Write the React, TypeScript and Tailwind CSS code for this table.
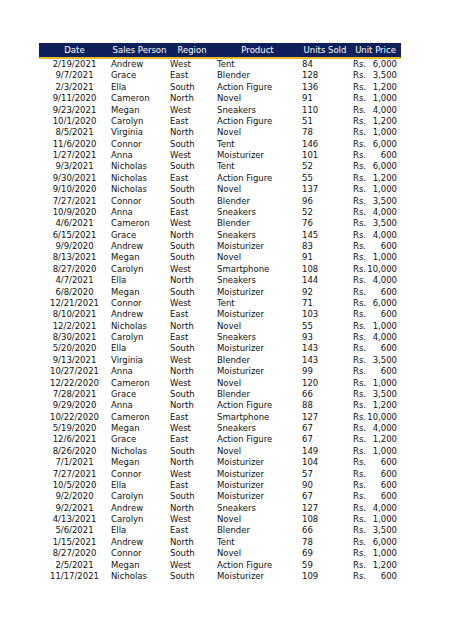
import React from 'react';

type Sale = [string, string, string, string, number, number];

const sales: Sale[] = [
    ['2/19/2021', 'Andrew', 'West', 'Tent', 84, 6000],
    ['9/7/2021', 'Grace', 'East', 'Blender', 128, 3500],
    ['2/3/2021', 'Ella', 'South', 'Action Figure', 136, 1200],
    ['9/11/2020', 'Cameron', 'North', 'Novel', 91, 1000],
    ['9/23/2021', 'Megan', 'West', 'Sneakers', 110, 4000],
    ['10/1/2020', 'Carolyn', 'East', 'Action Figure', 51, 1200],
    ['8/5/2021', 'Virginia', 'North', 'Novel', 78, 1000],
    ['11/6/2020', 'Connor', 'South', 'Tent', 146, 6000],
    ['1/27/2021', 'Anna', 'West', 'Moisturizer', 101, 600],
    ['9/3/2021', 'Nicholas', 'South', 'Tent', 52, 6000],
    ['9/30/2021', 'Nicholas', 'East', 'Action Figure', 55, 1200],
    ['9/10/2020', 'Nicholas', 'South', 'Novel', 137, 1000],
    ['7/27/2021', 'Connor', 'South', 'Blender', 96, 3500],
    ['10/9/2020', 'Anna', 'East', 'Sneakers', 52, 4000],
    ['4/6/2021', 'Cameron', 'West', 'Blender', 76, 3500],
    ['6/15/2021', 'Grace', 'North', 'Sneakers', 145, 4000],
    ['9/9/2020', 'Andrew', 'South', 'Moisturizer', 83, 600],
    ['8/13/2021', 'Megan', 'South', 'Novel', 91, 1000],
    ['8/27/2020', 'Carolyn', 'West', 'Smartphone', 108, 10000],
    ['4/7/2021', 'Ella', 'North', 'Sneakers', 144, 4000],
    ['6/8/2020', 'Megan', 'South', 'Moisturizer', 92, 600],
    ['12/21/2021', 'Connor', 'West', 'Tent', 71, 6000],
    ['8/10/2021', 'Andrew', 'East', 'Moisturizer', 103, 600],
    ['12/2/2021', 'Nicholas', 'North', 'Novel', 55, 1000],
    ['8/30/2021', 'Carolyn', 'East', 'Sneakers', 93, 4000],
    ['5/20/2020', 'Ella', 'South', 'Moisturizer', 143, 600],
    ['9/13/2021', 'Virginia', 'West', 'Blender', 143, 3500],
    ['10/27/2021', 'Anna', 'North', 'Moisturizer', 99, 600],
    ['12/22/2020', 'Cameron', 'West', 'Novel', 120, 1000],
    ['7/28/2021', 'Grace', 'South', 'Blender', 66, 3500],
    ['9/29/2020', 'Anna', 'North', 'Action Figure', 88, 1200],
    ['10/22/2020', 'Cameron', 'East', 'Smartphone', 127, 10000],
    ['5/19/2020', 'Megan', 'West', 'Sneakers', 67, 4000],
    ['12/6/2021', 'Grace', 'East', 'Action Figure', 67, 1200],
    ['8/26/2020', 'Nicholas', 'South', 'Novel', 149, 1000],
    ['7/1/2021', 'Megan', 'North', 'Moisturizer', 104, 600],
    ['7/27/2021', 'Connor', 'West', 'Moisturizer', 57, 600],
    ['10/5/2020', 'Ella', 'East', 'Moisturizer', 90, 600],
    ['9/2/2020', 'Carolyn', 'South', 'Moisturizer', 67, 600],
    ['9/2/2021', 'Andrew', 'North', 'Sneakers', 127, 4000],
    ['4/13/2021', 'Carolyn', 'West', 'Novel', 108, 1000],
    ['5/6/2021', 'Ella', 'East', 'Blender', 66, 3500],
    ['1/15/2021', 'Andrew', 'North', 'Tent', 78, 6000],
    ['8/27/2020', 'Connor', 'South', 'Novel', 69, 1000],
    ['2/5/2021', 'Megan', 'West', 'Action Figure', 59, 1200],
    ['11/17/2021', 'Nicholas', 'South', 'Moisturizer', 109, 600],
];

const cols = 'grid grid-cols-[71px_59px_46px_85px_50px_51px]';

export default function App() {
    return (
        <div className="min-h-[632px] bg-white pt-[43px] pl-[39px] font-['DejaVu_Sans',sans-serif] text-[8.5px]">
            <div className="w-[362px]">
                {/* Header */}
                <div className={`${cols} h-[16px] items-center border-b-2 border-[#e9bb24] bg-[#0e1f5b] text-white leading-none`}>
                    <div className="text-center">Date</div>
                    <div className="text-center">Sales Person</div>
                    <div className="text-center">Region</div>
                    <div className="text-center">Product</div>
                    <div className="text-center">Units Sold</div>
                    <div className="text-center">Unit Price</div>
                </div>

                {/* Rows */}
                {sales.map(([date, person, region, product, units, price], i) => (
                    <div key={i} className={`${cols} leading-[11.38px] text-[#111]`}>
                        <div className="text-center">{date}</div>
                        <div className="pl-[1px]">{person}</div>
                        <div className="pl-[1px]">{region}</div>
                        <div className="pl-[2px]">{product}</div>
                        <div className="pl-[2px]">{units}</div>
                        <div className="flex justify-between pl-[3px] pr-[4px]">
                            <span>Rs.</span>
                            <span>{price.toLocaleString('en-US')}</span>
                        </div>
                    </div>
                ))}
            </div>
        </div>
    );
}
